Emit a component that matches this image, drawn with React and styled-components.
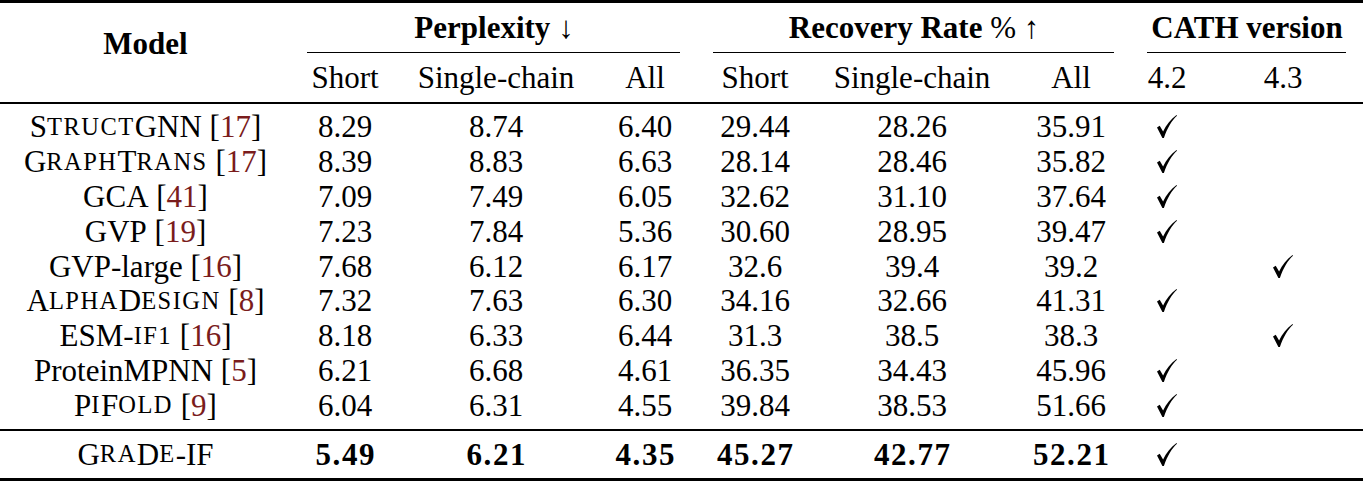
import React from "react";
import styled, { createGlobalStyle, css } from "styled-components";

const GlobalStyle = createGlobalStyle`
  body {
    margin: 0;
    background: #ffffff;
    color: #000000;
    font-family: "Liberation Serif", "Times New Roman", serif;
  }
`;

// Shared column layout for every band of the table
const columns = css`
  display: grid;
  grid-template-columns: 291px 108px 194px 104px 116px 198px 120px 72px 160px;
`;

// Built on render so the styled spans below already exist
const getRows = () => [
  { name: <>S<Low>truct</Low>GNN</>, cite: 17, ppl: ["8.29", "8.74", "6.40"], rec: ["29.44", "28.26", "35.91"], v: 42 },
  { name: <>G<Low>raph</Low>T<Low>rans</Low></>, cite: 17, ppl: ["8.39", "8.83", "6.63"], rec: ["28.14", "28.46", "35.82"], v: 42 },
  { name: <>GCA</>, cite: 41, ppl: ["7.09", "7.49", "6.05"], rec: ["32.62", "31.10", "37.64"], v: 42 },
  { name: <>GVP</>, cite: 19, ppl: ["7.23", "7.84", "5.36"], rec: ["30.60", "28.95", "39.47"], v: 42 },
  { name: <>GVP-large</>, cite: 16, ppl: ["7.68", "6.12", "6.17"], rec: ["32.6", "39.4", "39.2"], v: 43 },
  { name: <>A<Low>lpha</Low>D<Low>esign</Low></>, cite: 8, ppl: ["7.32", "7.63", "6.30"], rec: ["34.16", "32.66", "41.31"], v: 42 },
  { name: <>ESM-<Low>if1</Low></>, cite: 16, ppl: ["8.18", "6.33", "6.44"], rec: ["31.3", "38.5", "38.3"], v: 43 },
  { name: <>ProteinMPNN</>, cite: 5, ppl: ["6.21", "6.68", "4.61"], rec: ["36.35", "34.43", "45.96"], v: 42 },
  { name: <>P<Low>i</Low>F<Low>old</Low></>, cite: 9, ppl: ["6.04", "6.31", "4.55"], rec: ["39.84", "38.53", "51.66"], v: 42 },
];

const getOurs = () => ({
  name: <>G<Low>ra</Low>D<Low>e</Low>-IF</>,
  ppl: ["5.49", "6.21", "4.35"],
  rec: ["45.27", "42.77", "52.21"],
});

// LaTeX style \checkmark
const Check = () => (
  <CheckIcon viewBox="0 0 20 23" aria-hidden="true">
    <path d="M0 12.4 L2.7 10.8 L6.1 16.6 C9.2 10 13.6 4.2 19.5 0 L20 0.8 C14.9 5.4 10.4 12.8 6.9 23 L5.4 23 Z" />
  </CheckIcon>
);

const App = () => {
  const rows = getRows();
  const ours = getOurs();

  return (
    <>
      <GlobalStyle />
      <Table>
        <Rule $w={3} />
        <Head>
          <ModelHead>Model</ModelHead>
          <GroupHead $col="2 / 5">
            Perplexity <Thin>↓</Thin>
          </GroupHead>
          <GroupHead $col="5 / 8">
            Recovery Rate <Thin>% ↑</Thin>
          </GroupHead>
          <GroupHead $col="8 / 10">CATH version</GroupHead>
          <CMid $col="2 / 5" />
          <CMid $col="5 / 8" />
          <CMid $col="8 / 10" />
          <SubHead>Short</SubHead>
          <SubHead>Single-chain</SubHead>
          <SubHead>All</SubHead>
          <SubHead>Short</SubHead>
          <SubHead>Single-chain</SubHead>
          <SubHead>All</SubHead>
          <SubHead>4.2</SubHead>
          <SubHead>4.3</SubHead>
        </Head>
        <Rule $w={2} />
        <Body>
          {rows.map((r, i) => (
            <React.Fragment key={i}>
              <Cell>
                {r.name}&nbsp;[<Cite>{r.cite}</Cite>]
              </Cell>
              {r.ppl.map((p, j) => (
                <Cell key={"p" + j}>{p}</Cell>
              ))}
              {r.rec.map((p, j) => (
                <Cell key={"r" + j}>{p}</Cell>
              ))}
              <Cell>{r.v === 42 && <Check />}</Cell>
              <Cell>{r.v === 43 && <Check />}</Cell>
            </React.Fragment>
          ))}
        </Body>
        <Rule $w={2} />
        <Foot>
          <Cell>{ours.name}</Cell>
          {ours.ppl.map((p, j) => (
            <BoldCell key={"p" + j}>{p}</BoldCell>
          ))}
          {ours.rec.map((p, j) => (
            <BoldCell key={"r" + j}>{p}</BoldCell>
          ))}
          <Cell>
            <Check />
          </Cell>
          <Cell />
        </Foot>
        <Rule $w={3} />
      </Table>
    </>
  );
};

export default App;

// Whole table
const Table = styled.div`
  width: 1363px;
  display: flex;
  flex-direction: column;
  font-size: 31px;
`;

// Horizontal booktabs rules
const Rule = styled.div`
  height: ${(p) => p.$w}px;
  background: #000000;
`;

// Two header rows with the cmidrules between them
const Head = styled.div`
  ${columns}
  grid-template-rows: 49px 1px 49px;
`;

const ModelHead = styled.div`
  grid-column: 1;
  grid-row: 1 / 4;
  padding-top: 23px;
  line-height: 35px;
  text-align: center;
  font-weight: bold;
`;

const GroupHead = styled.div`
  grid-column: ${(p) => p.$col};
  grid-row: 1;
  line-height: 49px;
  text-align: center;
  font-weight: bold;
  white-space: nowrap;
`;

const Thin = styled.span`
  font-weight: normal;
`;

const CMid = styled.div`
  grid-column: ${(p) => p.$col};
  grid-row: 2;
  margin: 0 17px 0 16px;
  background: #000000;
`;

const SubHead = styled.div`
  grid-row: 3;
  line-height: 49px;
  text-align: center;
  white-space: nowrap;
`;

// Data rows
const Body = styled.div`
  ${columns}
  grid-auto-rows: 34.8px;
  padding: 5.6px 0 6px;
`;

const Foot = styled.div`
  ${columns}
  grid-auto-rows: 35px;
  padding: 6px 0 6.5px;
`;

const Cell = styled.div`
  display: flex;
  align-items: center;
  justify-content: center;
  white-space: nowrap;
  line-height: 1;
`;

const BoldCell = styled(Cell)`
  font-weight: bold;
  letter-spacing: 1.6px;
  padding-left: 1.6px;
`;

// Small caps made from shrunken capitals, wider set like LaTeX \textsc
const Low = styled.span`
  font-size: 0.79em;
  text-transform: uppercase;
  letter-spacing: 0.06em;
`;

const Cite = styled.span`
  color: #7a1c1c;
`;

const CheckIcon = styled.svg`
  width: 20px;
  height: 23px;
  fill: #000000;
`;
